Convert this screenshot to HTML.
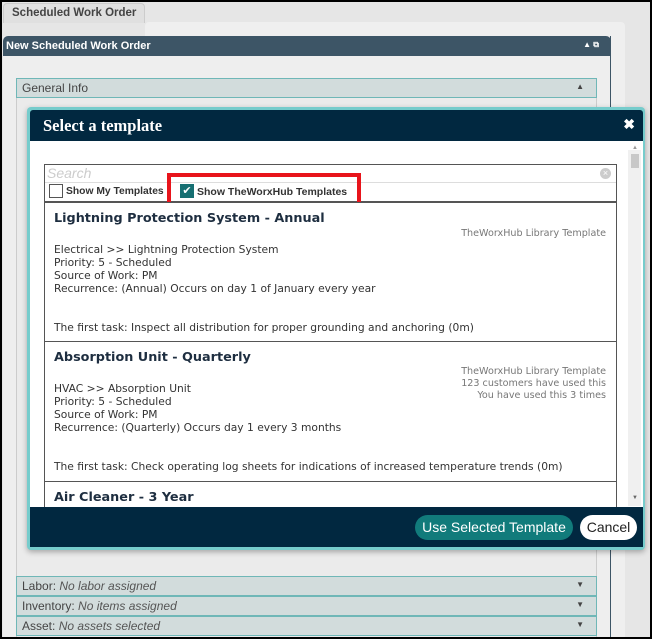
<!DOCTYPE html>
<html><head><style>
*{box-sizing:border-box;margin:0;padding:0}
body{width:652px;height:639px;background:#000;position:relative;overflow:hidden;font-family:"Liberation Sans",sans-serif}
.a{position:absolute;white-space:nowrap}
.v{font-family:"DejaVu Sans",sans-serif}
.bar{position:absolute;left:16px;width:581px;height:20px;background:#d2dcdc;border:1px solid #6fb7b7;font-size:12px;color:#444;padding:2px 5px}
.bar i{color:#555}
.bar .ar{position:absolute;right:12px;top:3px;font-size:8px}
.item{position:absolute;left:44px;width:573px;border-bottom:1px solid #555;background:#fff;font-size:10.7px;color:#333;line-height:13px}
.item h3{font-size:12.8px;color:#1e2e40;font-weight:bold;position:absolute;left:9px;top:9px;white-space:nowrap}
.item .r{position:absolute;right:10px;text-align:right;color:#777;font-size:9.6px;line-height:12px}
</style></head><body>
<div class="a" style="left:2px;top:2px;width:648px;height:635px;background:#e6e6e6"></div>
<div class="a" style="left:145px;top:22px;width:480px;height:615px;background:#efefef;border-radius:4px 4px 0 0"></div>
<div class="a" style="left:3px;top:3px;width:142px;height:20px;background:#e0e0e0;border:1px solid #ccc;border-bottom:none;border-radius:4px 4px 0 0;font-size:11.5px;font-weight:bold;color:#444;padding:3px 8px">Scheduled Work Order</div>
<div class="a" style="left:3px;top:36px;width:608px;height:601px;background:#eeeeee;border-right:1px solid #3d5566"></div>
<div class="a" style="left:3px;top:36px;width:608px;height:20px;background:#3d5566;border-radius:5px 5px 0 0;color:#fff;font-size:11px;font-weight:bold;padding:4px 3px">New Scheduled Work Order<span style="position:absolute;right:12px;top:4px;font-size:8px">▲ ⧉</span></div>
<div class="a" style="left:16px;top:97px;width:581px;height:540px;background:#ebebeb;border-left:1px solid #ccc;border-right:1px solid #ccc"></div>
<div class="bar" style="top:78px">General Info<span class="ar">▲</span></div>
<div class="bar" style="top:576px">Labor: <i>No labor assigned</i><span class="ar">▼</span></div>
<div class="bar" style="top:596px">Inventory: <i>No items assigned</i><span class="ar">▼</span></div>
<div class="bar" style="top:616px">Asset: <i>No assets selected</i><span class="ar">▼</span></div>

<div class="a" style="left:27px;top:107px;width:618px;height:443px;background:#76cccc;border-radius:4px;box-shadow:0 2px 6px rgba(0,0,0,.3)"></div>
<div class="a" style="left:30px;top:110px;width:613px;height:31px;background:#012840;border-radius:3px 3px 0 0;color:#fff;font-family:'Liberation Serif',serif;font-weight:bold;font-size:16.5px;padding:6px 13px">Select a template<span style="position:absolute;right:8px;top:6px;font-family:'Liberation Sans';font-size:14px">✖</span></div>
<div class="a" style="left:30px;top:141px;width:613px;height:367px;background:#fff"></div>
<div class="a" style="left:628px;top:150px;width:13px;height:356px;background:#f0f0f0"></div>
<div class="a" style="left:631px;top:154px;width:8px;height:14px;background:#c8c8c8"></div>
<div class="a" style="left:632px;top:145px;font-size:6px;color:#999">▲</div>
<div class="a" style="left:632px;top:495px;font-size:6px;color:#666">▼</div>
<div class="a" style="left:44px;top:164px;width:573px;height:38px;border:1px solid #555;background:#fff"></div>
<div class="a" style="left:47px;top:165px;font-size:14px;font-style:italic;color:#ccc">Search</div>
<div class="a" style="left:600px;top:168px;width:11px;height:11px;border-radius:50%;background:#ccc;color:#fff;font-size:9px;line-height:11px;text-align:center">×</div>
<div class="a" style="left:45px;top:182px;width:571px;height:1px;background:#ddd"></div>
<div class="a" style="left:49px;top:184px;width:14px;height:14px;border:1px solid #555;background:#fff"></div>
<div class="a" style="left:66px;top:186px;font-size:10.3px;font-weight:bold;color:#333">Show My Templates</div>
<div class="a" style="left:180px;top:184px;width:14px;height:14px;background:#166f72;color:#fff;font-size:11px;line-height:14px;text-align:center">✔</div>
<div class="a" style="left:197px;top:186px;font-size:10.5px;font-weight:bold;color:#333">Show TheWorxHub Templates</div>
<div class="a" style="left:167px;top:173px;width:194px;height:37px;border:4px solid #e8141b"></div>

<div class="item v" style="top:202px;height:140px;border-top:1px solid #555;border-left:1px solid #555;border-right:1px solid #555">
<h3>Lightning Protection System - Annual</h3>
<div class="r" style="top:25px">TheWorxHub Library Template</div>
<div class="a" style="left:9px;top:40px">Electrical &gt;&gt; Lightning Protection System<br>Priority: 5 - Scheduled<br>Source of Work: PM<br>Recurrence: (Annual) Occurs on day 1 of January every year</div>
<div class="a" style="left:9px;top:118px">The first task: Inspect all distribution for proper grounding and anchoring (0m)</div>
</div>
<div class="item v" style="top:342px;height:140px;border-left:1px solid #555;border-right:1px solid #555">
<h3>Absorption Unit - Quarterly</h3>
<div class="r" style="top:24px">TheWorxHub Library Template<br>123 customers have used this<br>You have used this 3 times</div>
<div class="a" style="left:9px;top:40px">HVAC &gt;&gt; Absorption Unit<br>Priority: 5 - Scheduled<br>Source of Work: PM<br>Recurrence: (Quarterly) Occurs day 1 every 3 months</div>
<div class="a" style="left:9px;top:118px">The first task: Check operating log sheets for indications of increased temperature trends (0m)</div>
</div>
<div class="item v" style="top:482px;height:25px;border:none;border-left:1px solid #555;border-right:1px solid #555">
<h3>Air Cleaner - 3 Year</h3>
</div>

<div class="a" style="left:30px;top:507px;width:613px;height:40px;background:#012840"></div>
<div class="a" style="left:415px;top:515px;width:158px;height:25px;background:#117b7b;border-radius:13px;color:#fff;font-size:14px;text-align:center;line-height:25px">Use Selected Template</div>
<div class="a" style="left:580px;top:515px;width:57px;height:25px;background:#fff;border-radius:13px;color:#222;font-size:14px;text-align:center;line-height:25px">Cancel</div>
</body></html>
